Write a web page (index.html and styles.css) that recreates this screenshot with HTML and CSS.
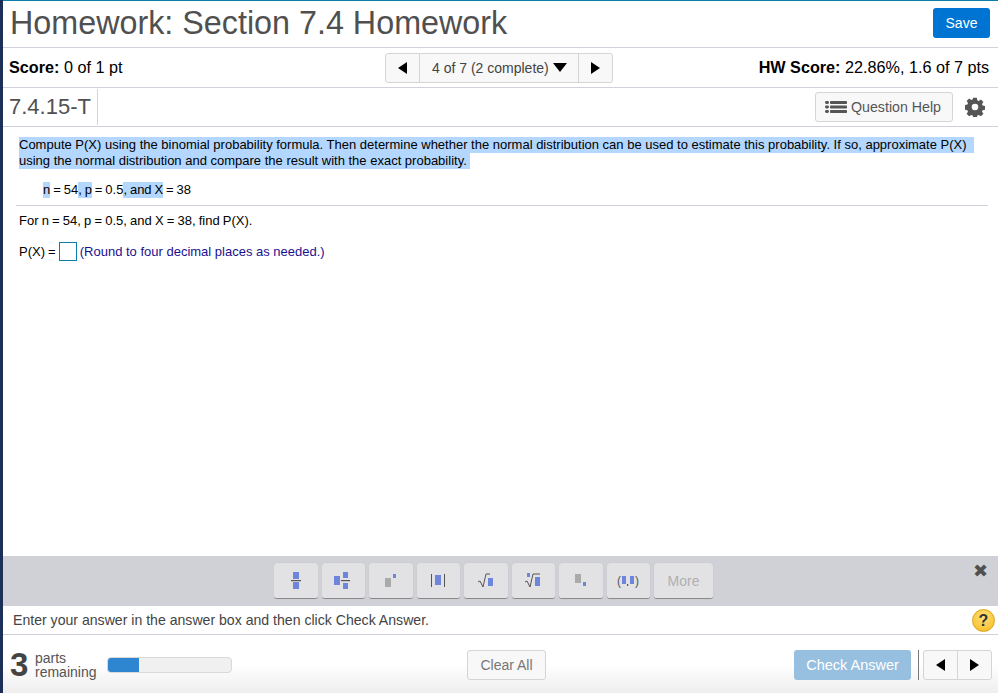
FILE: index.html
```html
<!DOCTYPE html>
<html lang="en">
<head>
<meta charset="utf-8">
<title>Homework: Section 7.4 Homework</title>
<link rel="stylesheet" href="styles.css">
</head>
<body>
<div class="strip"></div>
<main class="app">
  <header class="title-row">
    <h1>Homework: Section 7.4 Homework</h1>
    <button class="save">Save</button>
  </header>
  <section class="score-row">
    <div class="score"><b>Score:</b> 0 of 1 pt</div>
    <nav class="pager">
      <span class="pager-btn"><i class="tri-left"></i></span>
      <span class="pager-label">4 of 7 (2 complete)<i class="tri-down"></i></span>
      <span class="pager-btn"><i class="tri-right"></i></span>
    </nav>
    <div class="hw-score"><b>HW Score:</b> 22.86%, 1.6 of 7 pts</div>
  </section>
  <section class="question-row">
    <div class="qid">7.4.15-T</div>
    <button class="help">
      <svg width="22" height="14" viewBox="0 0 22 14"><g fill="#555"><rect x="0" y="1" width="4" height="3" rx="1.4"/><rect x="0" y="5.5" width="4" height="3" rx="1.4"/><rect x="0" y="10" width="4" height="3" rx="1.4"/><rect x="5" y="1" width="17" height="3" rx=".8"/><rect x="5" y="5.5" width="17" height="3" rx=".8"/><rect x="5" y="10" width="17" height="3" rx=".8"/></g></svg>
      Question Help
    </button>
    <svg class="gear" width="20" height="20" viewBox="0 0 20 20"><path fill="#555" fill-rule="evenodd" d="M8.2 0.8h3.6l.5 2.5 1.5.6 2.1-1.4 2.5 2.5-1.4 2.1.6 1.5 2.5.5v3.6l-2.5.5-.6 1.5 1.4 2.1-2.5 2.5-2.1-1.4-1.5.6-.5 2.5H8.2l-.5-2.5-1.5-.6-2.1 1.4-2.5-2.5 1.4-2.1-.6-1.5-2.5-.5V8.1l2.5-.5.6-1.5-1.4-2.1 2.5-2.5 2.1 1.4 1.5-.6zM10 6.7a3.3 3.3 0 1 0 0 6.6 3.3 3.3 0 0 0 0-6.6z"/></svg>
  </section>
  <section class="content">
    <p class="prompt"><span class="sel line-a">Compute P(X) using the binomial probability formula. Then determine whether the normal distribution can be used to estimate this probability. If so, approximate P(X)</span><br><span class="sel line-b">using the normal distribution and compare the result with the exact probability.</span></p>
    <p class="given"><span class="sel">n</span> = 54<span class="sel">, p</span> = 0.5<span class="sel">, and X</span> = 38</p>
    <hr class="rule">
    <p class="ask">For n = 54, p = 0.5, and X = 38, find P(X).</p>
    <p class="answer"><span class="px">P(X) =</span><span class="box"></span><span class="hint">(Round to four decimal places as needed.)</span></p>
  </section>
  <section class="toolbar">
    <div class="tools">
      <span class="tool"><svg width="12" height="18" viewBox="0 0 12 18"><rect x="3" y="0" width="6" height="7" fill="#6d86dc"/><rect x="1" y="8" width="10" height="1.2" fill="#555"/><rect x="3" y="10" width="6" height="7" fill="#6d86dc"/></svg></span>
      <span class="tool"><svg width="18" height="18" viewBox="0 0 18 18"><rect x="0" y="4" width="6" height="9" fill="#6d86dc"/><rect x="9" y="0" width="5" height="6" fill="#6d86dc"/><rect x="7" y="8" width="9" height="1.2" fill="#555"/><rect x="9" y="11" width="5" height="6" fill="#6d86dc"/></svg></span>
      <span class="tool"><svg width="12" height="14" viewBox="0 0 12 14"><rect x="0" y="4" width="6" height="9" fill="#aaa"/><rect x="8" y="0" width="3" height="4" fill="#6d86dc"/></svg></span>
      <span class="tool"><svg width="14" height="14" viewBox="0 0 14 14"><rect x="0" y="0" width="1" height="13" fill="#555"/><rect x="4" y="1" width="6" height="10" fill="#6d86dc"/><rect x="13" y="0" width="1" height="13" fill="#555"/></svg></span>
      <span class="tool"><svg width="16" height="16" viewBox="0 0 16 16"><path d="M0 9l2-1 3 6 3-13h4" fill="none" stroke="#555" stroke-width="1"/><rect x="10" y="5" width="5" height="8" fill="#6d86dc"/></svg></span>
      <span class="tool"><svg width="16" height="16" viewBox="0 0 16 16"><rect x="2" y="0" width="3" height="4" fill="#6d86dc"/><path d="M0 9l2-1 3 6 3-13h7" fill="none" stroke="#555" stroke-width="1"/><rect x="10" y="4" width="5" height="9" fill="#6d86dc"/></svg></span>
      <span class="tool"><svg width="12" height="14" viewBox="0 0 12 14"><rect x="0" y="0" width="6" height="9" fill="#aaa"/><rect x="8" y="8" width="3" height="4" fill="#6d86dc"/></svg></span>
      <span class="tool"><svg width="22" height="14" viewBox="0 0 22 14"><text x="0" y="11" font-family="Liberation Sans" font-size="12" fill="#555">(</text><rect x="5" y="2" width="4" height="8" fill="#6d86dc"/><rect x="13" y="2" width="4" height="8" fill="#6d86dc"/><rect x="10" y="10" width="1.2" height="2" fill="#555"/><text x="18" y="11" font-family="Liberation Sans" font-size="12" fill="#555">)</text></svg></span>
      <span class="tool more">More</span>
    </div>
    <span class="close">&#10006;</span>
  </section>
  <section class="instruction">
    <span>Enter your answer in the answer box and then click Check Answer.</span>
    <span class="q-mark">?</span>
  </section>
  <footer class="footer">
    <span class="parts-num">3</span>
    <span class="parts-text">parts<br>remaining</span>
    <span class="progress"><span class="progress-fill"></span></span>
    <button class="clear">Clear All</button>
    <button class="check">Check Answer</button>
    <span class="sep"></span>
    <span class="mini-pager">
      <span class="mini-btn"><i class="tri-left"></i></span>
      <span class="mini-btn"><i class="tri-right"></i></span>
    </span>
  </footer>
</main>
</body>
</html>
```

FILE: styles.css
```css
* { box-sizing: border-box; }
html, body { margin: 0; height: 693px; overflow: hidden; }
body { display: flex; font-family: "Liberation Sans", Arial, sans-serif; color: #000; background: #fff; }
.strip { width: 3px; flex: none; background: #1c2f57; }
.app { flex: 1; min-width: 0; height: 693px; display: flex; flex-direction: column; border-top: 1px solid #0a7ea8; }
button { font-family: inherit; cursor: default; }

.title-row { height: 47px; flex: none; display: flex; align-items: center; justify-content: space-between; padding: 0 8px 2px 7px; border-bottom: 1px solid #cfd2dc; }
h1 { margin: 0; font-size: 32.3px; font-weight: 400; color: #505050; line-height: 40px; }
.save { width: 57px; height: 30px; background: #0074d2; color: #fff; border: 0; border-radius: 3px; font-size: 14px; padding: 0; }

.score-row { height: 40px; flex: none; display: grid; grid-template-columns: 1fr auto 1fr; align-items: center; padding: 0 9px 0 6px; border-bottom: 1px solid #cfd2dc; font-size: 16.2px; }
.hw-score { justify-self: end; }
.pager { display: flex; height: 30px; border: 1px solid #d5d5d5; border-radius: 3px; background: #f8f8f8; }
.pager-btn { width: 33px; display: flex; align-items: center; justify-content: center; }
.pager-label { width: 160px; display: flex; align-items: center; padding-left: 12px; border: solid #d5d5d5; border-width: 0 1px; font-size: 14px; color: #444; }
.tri-left { width: 0; height: 0; border: 6px solid transparent; border-left: 0; border-right: 9px solid #000; }
.tri-right { width: 0; height: 0; border: 6px solid transparent; border-right: 0; border-left: 9px solid #000; }
.tri-down { width: 0; height: 0; margin-left: 4px; border: 7.5px solid transparent; border-bottom: 0; border-top: 9px solid #000; }

.question-row { height: 39px; flex: none; display: flex; align-items: center; padding-left: 6px; border-bottom: 1px solid #cfd2dc; }
.qid { width: 89px; height: 36px; font-size: 22px; line-height: 36px; color: #505050; border-right: 1px solid #d5d5d5; }
.help { margin-left: auto; width: 138px; height: 30px; display: flex; align-items: center; justify-content: center; gap: 4px; padding: 0 2px 0 0; background: #f8f8f8; border: 1px solid #d5d5d5; border-radius: 3px; font-size: 14.2px; color: #555; }
.gear { margin: 0 13px 0 12px; }

.content { flex: 1; min-height: 0; padding: 10px 10px 0 16px; font-size: 13px; line-height: 16px; }
.content p { margin: 0; }
.sel { display: inline-block; background: #b3d7ff; }
.line-a { padding-right: 7px; }
.line-b { padding-right: 3px; }
.given { margin-top: 13px !important; padding-left: 24px; word-spacing: -0.7px; }
.rule { margin: 7px 0 7px -3px; border: 0; border-top: 1px solid #cfd2dc; }
.ask { word-spacing: -0.45px; }
.answer { margin-top: 13px !important; display: flex; align-items: center; gap: 3px; height: 19px; }
.px { word-spacing: -0.5px; }
.box { width: 18px; height: 19px; border: 1px solid #0a7ea8; background: #fff; }
.hint { color: #1a0f8f; }

.toolbar { height: 50px; flex: none; display: flex; align-items: center; background: #d0d1d6; padding-left: 271px; position: relative; }
.tools { display: flex; gap: 4px; }
.tool { width: 43.5px; height: 36px; display: flex; align-items: center; justify-content: center; background: #e2e2e4; border-radius: 3px; border-bottom: 1px solid #8a8a8a; box-shadow: 0 0 1px #b5b5b8; }
.more { width: 59px; color: #b0b0b0; font-size: 14px; }
.close { position: absolute; right: 10px; top: 4px; font-size: 18px; color: #505050; }

.instruction { height: 29px; flex: none; display: flex; align-items: center; justify-content: space-between; padding: 0 3px 0 10px; border-bottom: 1px solid #cfd2dc; font-size: 14.1px; color: #444; }
.q-mark { width: 23px; height: 23px; border-radius: 50%; background: radial-gradient(circle at 50% 35%, #ffe27a, #f5b91c); border: 1px solid #d9a41a; color: #333; font-weight: 700; font-size: 16px; line-height: 21px; text-align: center; }

.footer { flex: none; height: 58px; display: flex; align-items: center; padding: 2px 6px 0 7px; background: linear-gradient(#fff 50%, #eee); }
.parts-num { font-size: 33px; font-weight: 700; color: #444; width: 25px; }
.parts-text { font-size: 14px; line-height: 14px; color: #555; width: 72px; }
.progress { width: 125px; height: 16px; background: #f0f0f0; border: 1px solid #d8d8d8; border-radius: 4px; overflow: hidden; display: block; margin-top: -1px; }
.progress-fill { display: block; width: 31px; height: 100%; background: #2e86d0; }
.clear { margin-left: 235px; width: 79px; height: 30px; background: #f8f8f8; border: 1px solid #d5d5d5; border-radius: 3px; font-size: 14px; color: #777; padding: 0; }
.check { margin-left: auto; width: 117px; height: 30px; background: #97c0e0; border: 0; border-radius: 3px; font-size: 14.5px; color: #fff; padding: 0; }
.sep { width: 1px; height: 30px; background: #777; margin: 0 4px 0 7px; }
.mini-pager { display: flex; width: 69px; height: 30px; border: 1px solid #d5d5d5; border-radius: 3px; background: #f8f8f8; }
.mini-btn { flex: 1; display: flex; align-items: center; justify-content: center; }
.mini-btn + .mini-btn { border-left: 1px solid #d5d5d5; }
```
